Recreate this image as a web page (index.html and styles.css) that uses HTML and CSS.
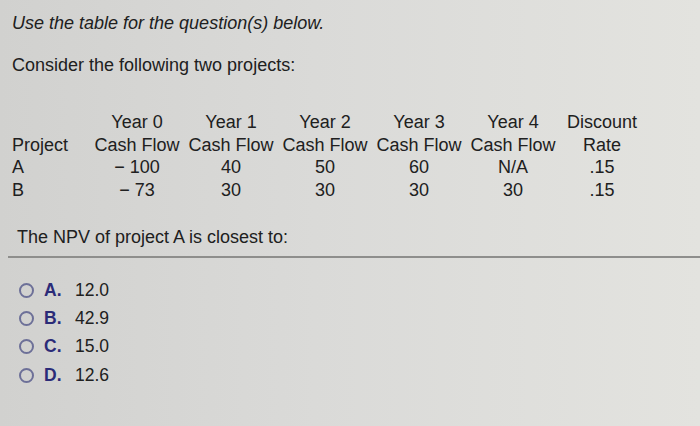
FILE: index.html
```html
<!DOCTYPE html>
<html>
<head>
<meta charset="utf-8">
<link rel="stylesheet" href="styles.css">
</head>
<body>
<div class="screen">
  <p class="intro">Use the table for the question(s) below.</p>
  <p class="lead">Consider the following two projects:</p>
  <div class="table">
    <div class="cell left"></div>
    <div class="cell">Year 0</div>
    <div class="cell">Year 1</div>
    <div class="cell">Year 2</div>
    <div class="cell">Year 3</div>
    <div class="cell">Year 4</div>
    <div class="cell">Discount</div>

    <div class="cell left">Project</div>
    <div class="cell">Cash Flow</div>
    <div class="cell">Cash Flow</div>
    <div class="cell">Cash Flow</div>
    <div class="cell">Cash Flow</div>
    <div class="cell">Cash Flow</div>
    <div class="cell">Rate</div>

    <div class="cell left">A</div>
    <div class="cell">&minus; 100</div>
    <div class="cell">40</div>
    <div class="cell">50</div>
    <div class="cell">60</div>
    <div class="cell">N/A</div>
    <div class="cell">.15</div>

    <div class="cell left">B</div>
    <div class="cell">&minus; 73</div>
    <div class="cell">30</div>
    <div class="cell">30</div>
    <div class="cell">30</div>
    <div class="cell">30</div>
    <div class="cell">.15</div>
  </div>
  <p class="question">The NPV of project A is closest to:</p>
  <hr class="rule">
  <ul class="options">
    <li class="option"><span class="radio"></span><span class="letter">A.</span><span class="value">12.0</span></li>
    <li class="option"><span class="radio"></span><span class="letter">B.</span><span class="value">42.9</span></li>
    <li class="option"><span class="radio"></span><span class="letter">C.</span><span class="value">15.0</span></li>
    <li class="option"><span class="radio"></span><span class="letter">D.</span><span class="value">12.6</span></li>
  </ul>
</div>
</body>
</html>
```
FILE: styles.css
```css
html, body {
  margin: 0;
  padding: 0;
  width: 700px;
  height: 426px;
  overflow: hidden;
}
body {
  font-family: "Liberation Sans", Arial, sans-serif;
  color: #202020;
  background: linear-gradient(to right, #d1d1cf 0%, #dadad8 45%, #e3e3df 100%);
}
.screen {
  height: 426px;
  box-sizing: border-box;
  padding: 13px 0 0 0;
}
.intro {
  margin: 0 0 0 12px;
  font-size: 18px;
  line-height: 21px;
  font-style: italic;
}
.lead {
  margin: 21px 0 0 12px;
  font-size: 18px;
  line-height: 21px;
}
.table {
  margin: 35px 0 0 12px;
  display: grid;
  grid-template-columns: 78px 94px 94px 94px 94px 94px 84px;
  grid-auto-rows: 22.5px;
  font-size: 18px;
  line-height: 22.5px;
}
.cell {
  text-align: center;
  white-space: nowrap;
}
.cell.left {
  text-align: left;
}
.question {
  margin: 26px 0 0 17px;
  font-size: 18px;
  line-height: 21px;
}
.rule {
  margin: 8px 0 0 8px;
  border: 0;
  height: 2px;
  background: #8e8e8c;
}
.options {
  list-style: none;
  margin: 18px 0 0 0;
  padding: 0 0 0 19px;
}
.option {
  display: flex;
  align-items: center;
  height: 28.3px;
  font-size: 17.5px;
}
.radio {
  width: 11px;
  height: 11px;
  border: 2px solid #6d7098;
  border-radius: 50%;
  margin-right: 10px;
}
.letter {
  font-weight: bold;
  color: #2b2b78;
  width: 31px;
}
.value {
  color: #202020;
}
```
